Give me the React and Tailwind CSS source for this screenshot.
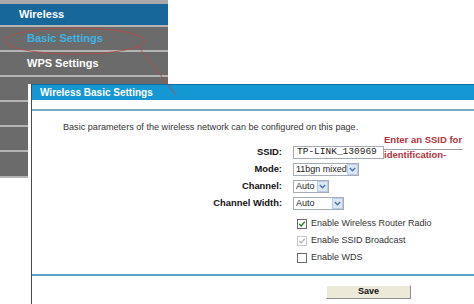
import React from "react";

function SelectBox({ label, width }) {
  return (
    <div
      className="flex items-center h-[13px] border border-[#a5acb5] bg-white"
      style={{ width }}
    >
      <span className="flex-1 pl-[2px] text-[9px] leading-none text-[#222] whitespace-nowrap overflow-hidden">{label}</span>
      <span className="w-[11px] h-[11px] mr-[0px] shrink-0 flex items-center justify-center bg-[#dbe7f7] border border-[#b9cbe5]">
        <svg width="7" height="5" viewBox="0 0 7 5">
          <path d="M0.8 1 L3.5 3.7 L6.2 1" fill="none" stroke="#4d6fa8" strokeWidth="1.4" />
        </svg>
      </span>
    </div>
  );
}

function Check({ checked, disabled, label }) {
  return (
    <div className="flex items-center h-[17px]">
      <span
        className={`w-[10px] h-[10px] flex items-center justify-center border bg-white ${
          disabled ? "border-[#c8c8c8]" : "border-[#6a6a6a]"
        }`}
      >
        {checked && (
          <svg width="8" height="8" viewBox="0 0 8 8">
            <path
              d="M1.2 4 L3.2 6 L6.8 1.8"
              fill="none"
              stroke={disabled ? "#b8b8b8" : "#2f7a2f"}
              strokeWidth="1.4"
            />
          </svg>
        )}
      </span>
      <span className="ml-[4px] text-[9px] text-[#333] whitespace-nowrap">{label}</span>
    </div>
  );
}

function Row({ label, children, h }) {
  return (
    <div className="flex items-center" style={{ height: h }}>
      <div className="w-[250px] text-right text-[9.4px] font-bold text-[#111]">{label}</div>
      <div className="ml-[11px]">{children}</div>
    </div>
  );
}

export default function App() {
  return (
    <div
      className="relative w-[474px] h-[304px] overflow-hidden bg-white"
      style={{ fontFamily: '"Liberation Sans", Arial, sans-serif' }}
    >
      {/* sidebar */}
      <div className="w-[168px]">
        <div className="h-[4px] bg-[#a9a9a9]" />
        <div className="h-[23px] bg-[#17679a] border-b-2 border-[#b4b4b4] flex items-center pl-[19px] text-[11px] font-bold text-white">
          Wireless
        </div>
        <div className="h-[25px] bg-[#6b6b6b] border-b-2 border-[#b4b4b4] flex items-center pl-[27px] text-[11px] font-bold text-[#3fb3e3]">
          Basic Settings
        </div>
        <div className="h-[25px] bg-[#6b6b6b] border-b-2 border-[#b4b4b4] flex items-center pl-[27px] text-[11px] font-bold text-white">
          WPS Settings
        </div>
        <div className="h-[25px] bg-[#6b6b6b] border-b-2 border-[#b4b4b4]" />
        <div className="h-[25px] bg-[#6b6b6b] border-b-2 border-[#b4b4b4]" />
        <div className="h-[25px] bg-[#6b6b6b] border-b-2 border-[#b4b4b4]" />
        <div className="h-[26px] bg-[#6b6b6b] border-b-2 border-[#b4b4b4]" />
      </div>

      {/* dialog */}
      <div className="absolute left-[28px] top-[84px] w-[470px] h-[230px] bg-white border-l-[3px] border-white">
        <div className="h-full border-l border-[#4a4a4a]">
          <div className="h-[16px] bg-[#1597d3] border-t border-[#0f6f9f] flex items-center pl-[8px] text-[10px] font-bold text-white">
            Wireless Basic Settings
          </div>
          <div className="h-[9px]" />
          <div className="h-[2px] bg-[#76a9c3]" />
          <div className="pl-[31px] pt-[11px] text-[9.1px] text-[#333] leading-[11px] whitespace-nowrap">
            Basic parameters of the wireless network can be configured on this page.
          </div>
          <div className="relative mt-[10px]">
            <Row label="SSID:" h={18}>
              <div className="w-[91px] h-[13px] border border-[#a5acb5] flex items-center pl-[3px] text-[9.5px] text-[#222]" style={{ fontFamily: '"Liberation Mono", "Courier New", monospace' }}>
                TP-LINK_130969
              </div>
            </Row>
            <Row label="Mode:" h={17}>
              <SelectBox label="11bgn mixed" width={66} />
            </Row>
            <Row label="Channel:" h={17}>
              <SelectBox label="Auto" width={36} />
            </Row>
            <Row label="Channel Width:" h={17}>
              <SelectBox label="Auto" width={51} />
            </Row>
            <div className="pl-[265px] pt-[3px]">
              <Check checked label="Enable Wireless Router Radio" />
              <Check checked disabled label="Enable SSID Broadcast" />
              <Check label="Enable WDS" />
            </div>
            <div className="absolute left-[352px] top-[-9px] text-[9.5px] font-bold text-[#b5343a]">
              <div className="h-[15px] leading-[12px] whitespace-nowrap">Enter an SSID for</div>
              <div className="border-t border-[#a0a0a0] w-[80px] -ml-[1px] pl-[1px] leading-[10px] whitespace-nowrap">identification-</div>
            </div>
          </div>
          <div className="mt-[8px] h-[2px] bg-[#5aa6c9]" />
          <div className="flex pl-[294px] pt-[9px]">
            <div className="w-[85px] h-[14px] bg-[#ece9d8] border border-t-white border-l-white border-r-[#8c8c8c] border-b-[#8c8c8c] flex items-center justify-center text-[9px] font-bold text-[#111]">
              Save
            </div>
          </div>
        </div>
      </div>

      {/* annotation */}
      <svg className="absolute left-0 top-0" width="474" height="304" viewBox="0 0 474 304">
        <ellipse cx="75" cy="41" rx="70" ry="13" fill="none" stroke="#b04b4b" strokeWidth="0.9" />
        <path d="M137 45 L176 95" stroke="#b04b4b" strokeWidth="0.9" />
      </svg>
    </div>
  );
}
